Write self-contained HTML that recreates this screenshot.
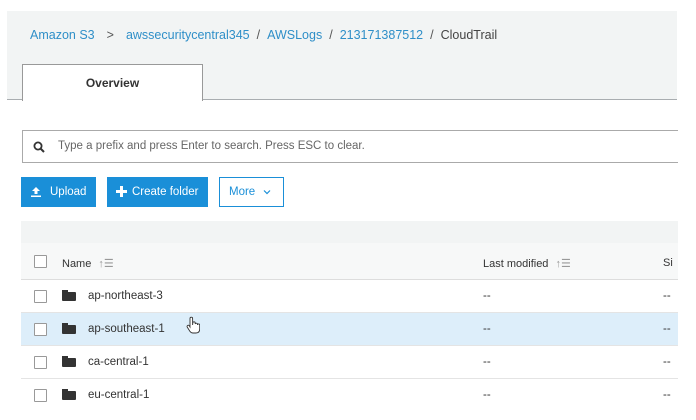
<!DOCTYPE html>
<html><head><style>
*{margin:0;padding:0;box-sizing:border-box}
body{width:696px;height:420px;background:#fff;font-family:"Liberation Sans",sans-serif;position:relative;overflow:hidden;color:#333}
.a{position:absolute}
.hdr{left:7px;top:11px;width:670px;height:89px;background:#f2f4f4;border-bottom:1px solid #a9adb0}
.bc{left:30px;top:28px;font-size:12.5px;color:#2f8fc8;white-space:nowrap}
.bc span{color:#555;margin:0 7px}
.tab{left:22px;top:64px;width:181px;height:37px;background:#fff;border:1px solid #999;border-bottom:none;font-size:12px;font-weight:bold;text-align:center;line-height:36px;color:#333}
.search{left:22px;top:130px;width:656px;height:33px;border:1px solid #aaa;border-right:none;font-size:11.5px;color:#666;line-height:31px;padding-left:35px}
.btn{top:177px;height:30px;font-size:11.5px;line-height:30px;color:#fff;background:#1a8fd8}
.band{left:21px;top:221px;width:657px;height:22px;background:#f2f4f4}
.th{left:21px;top:243px;width:657px;height:37px;background:#f7f8f8;border-bottom:1px solid #ddd}
.row{left:21px;width:657px;height:33px;border-bottom:1px solid #e4e4e4}
.cb{position:absolute;left:13px;top:10px;width:13px;height:13px;border:1px solid #999;background:#fff;border-radius:1px}
.t{position:absolute;font-size:11.5px;top:10px;color:#333}
.fold{position:absolute;left:41px;top:12px;width:14px;height:9px;background:#333;border-radius:1px}
.fold:before{content:"";position:absolute;left:0;top:-2px;width:6px;height:3px;background:#333}
</style></head><body>
<div class="a hdr"></div>
<div class="a bc">Amazon S3<span style="margin:0 12px">&gt;</span>awssecuritycentral345<span>/</span>AWSLogs<span>/</span>213171387512<span>/</span><b style="font-weight:normal;color:#444">CloudTrail</b></div>
<div class="a tab">Overview</div>
<div class="a search">Type a prefix and press Enter to search. Press ESC to clear.
<svg class="a" style="left:10px;top:10px" width="12" height="12" viewBox="0 0 12 12"><circle cx="5" cy="5" r="3.6" fill="none" stroke="#333" stroke-width="1.8"/><path d="M7.5 7.5L11 11" stroke="#333" stroke-width="2"/></svg></div>
<div class="a btn" style="left:21px;width:75px;padding-left:29px">Upload
<svg class="a" style="left:9px;top:9px" width="12" height="12" viewBox="0 0 12 12"><path d="M6 1L2 5h2.5v3h3V5H10z M1 9.5h10V11H1z" fill="#fff"/></svg></div>
<div class="a btn" style="left:107px;width:101px;padding-left:25px">Create folder
<svg class="a" style="left:9px;top:9px" width="11" height="11" viewBox="0 0 11 11"><path d="M4 0h3v4h4v3H7v4H4V7H0V4h4z" fill="#fff"/></svg></div>
<div class="a" style="left:219px;top:177px;width:65px;height:30px;border:1px solid #1a8fd8;color:#1a8fd8;font-size:11.5px;line-height:28px;padding-left:9px">More <svg style="margin-left:5px" width="8" height="6" viewBox="0 0 8 6"><path d="M1 1.5l3 3 3-3" fill="none" stroke="#1a8fd8" stroke-width="1.2"/></svg></div>
<div class="a band"></div>
<div class="a th"><div class="cb" style="top:12px"></div><div class="t" style="left:41px;top:14px;font-size:11px">Name <span style="color:#999;margin-left:4px">↑☰</span></div><div class="t" style="left:462px;top:14px;font-size:11px">Last modified <span style="color:#999;margin-left:4px">↑☰</span></div><div class="t" style="left:642px;top:14px;font-size:11px">Si</div></div>
<div class="a row" style="top:280px"><div class="cb"></div><div class="fold"></div><div class="t" style="left:67px">ap-northeast-3</div><div class="t" style="left:462px">--</div><div class="t" style="left:642px">--</div></div>
<div class="a row" style="top:313px;background:#ddeefa"><div class="cb"></div><div class="fold"></div><div class="t" style="left:67px">ap-southeast-1</div><div class="t" style="left:462px">--</div><div class="t" style="left:642px">--</div>
<svg class="a" style="left:165px;top:3px" width="14" height="18" viewBox="0 0 14 18"><path d="M4 2.5a1.3 1.3 0 0 1 2.6 0V9l.2-2a1.2 1.2 0 0 1 2.4 0v1a1.2 1.2 0 0 1 2.3 0v1a1.1 1.1 0 0 1 2.2 0v4c0 2.5-1.5 4-4 4H7c-1.5 0-2.5-.8-3.3-2L1.2 11a1.2 1.2 0 0 1 2-1.3L4 11z" fill="#fff" stroke="#333" stroke-width=".9"/></svg></div>
<div class="a row" style="top:346px"><div class="cb"></div><div class="fold"></div><div class="t" style="left:67px">ca-central-1</div><div class="t" style="left:462px">--</div><div class="t" style="left:642px">--</div></div>
<div class="a row" style="top:379px;border:none"><div class="cb"></div><div class="fold"></div><div class="t" style="left:67px">eu-central-1</div><div class="t" style="left:462px">--</div><div class="t" style="left:642px">--</div></div>
</body></html>
